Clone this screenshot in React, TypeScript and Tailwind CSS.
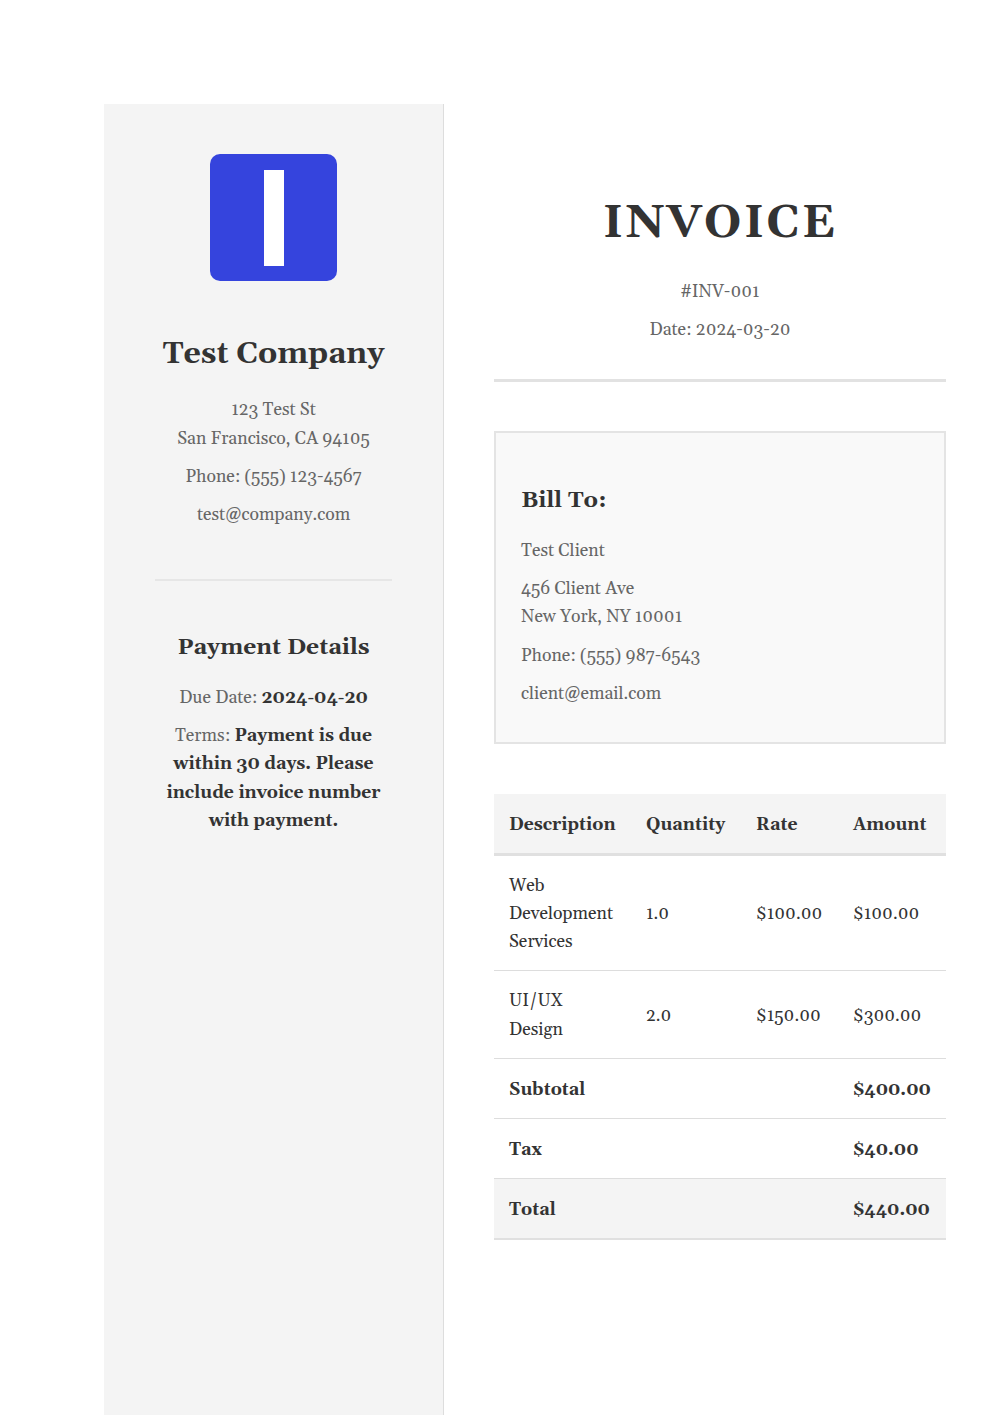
import React from "react";

const F = "font-['Gelasio','Georgia','Liberation_Serif',serif]";

function App() {
  return (
    <div className={`w-[1000px] h-[1415px] bg-white overflow-hidden pt-[104px] pl-[104px] pr-[4px] text-[#666666] text-[17.6px] leading-[28.32px] ${F}`}>
      <div className="flex h-[1311px]">
        <div className="w-[340px] shrink-0 bg-[#f4f4f4] border-r border-[#dddddd] p-[50px] text-center">
          <div className="w-[127px] h-[127px] mx-auto bg-[#3544dd] rounded-[10px] flex items-center justify-center">
            <div className="w-[20px] h-[96px] bg-white" />
          </div>
          <h1 className="mt-[49.4px] text-[30.4px] leading-[48px] font-bold text-[#333333]">Test Company</h1>
          <p className="mt-[18px]">123 Test St<br />San Francisco, CA 94105</p>
          <p className="mt-[10px]">Phone: (555) 123-4567</p>
          <p className="mt-[10px]">test@company.com</p>
          <div className="mt-[49px] mx-[1px] border-t-2 border-[#e6e6e6]" />
          <h2 className="mt-[49.6px] text-[22.88px] leading-[36px] font-bold text-[#333333]">Payment Details</h2>
          <p className="mt-[18px]">Due Date: <b className="text-[#333333]">2024-04-20</b></p>
          <p className="mt-[9.4px]">Terms: <b className="text-[#333333]">Payment is due within 30 days. Please include invoice number with payment.</b></p>
        </div>
        <div className="flex-1 px-[50px] pt-[50px] min-w-0">
          <div className="text-center border-b-[3px] border-[#e2e2e2] pb-[34px]">
            <h1 className="text-[46px] leading-[74px] font-bold tracking-[2.3px] text-[#333333] pt-[33px]">INVOICE</h1>
            <p className="mt-[17px]">#INV-001</p>
            <p className="mt-[10px]">Date: 2024-03-20</p>
          </div>
          <div className="mt-[49px] bg-[#f9f9f9] border-2 border-[#e4e4e4] px-[25px] pt-[50px] pb-[34px]">
            <h3 className="text-[22.88px] leading-[36px] font-bold text-[#333333]">Bill To:</h3>
            <p className="mt-[18px]">Test Client</p>
            <p className="mt-[10px]">456 Client Ave<br />New York, NY 10001</p>
            <p className="mt-[10px]">Phone: (555) 987-6543</p>
            <p className="mt-[10px]">client@email.com</p>
          </div>
          <table className="mt-[50px] w-full table-fixed border-collapse text-[#333333]">
            <thead>
              <tr className="bg-[#f4f4f4] border-b-[3px] border-[#e0e0e0] text-left">
                <th className="w-[137px] px-[15px] pt-[17px] pb-[13px]">Description</th>
                <th className="w-[110px] px-[15px] pt-[17px] pb-[13px]">Quantity</th>
                <th className="w-[97px] px-[15px] pt-[17px] pb-[13px]">Rate</th>
                <th className="w-[108px] px-[15px] pt-[17px] pb-[13px]">Amount</th>
              </tr>
            </thead>
            <tbody>
              <tr className="border-b border-[#dddddd]">
                <td className="px-[15px] pt-[16px] pb-[14px]">Web Development Services</td>
                <td className="px-[15px] pt-[16px] pb-[14px]">1.0</td>
                <td className="px-[15px] pt-[16px] pb-[14px]">$100.00</td>
                <td className="px-[15px] pt-[16px] pb-[14px]">$100.00</td>
              </tr>
              <tr className="border-b border-[#dddddd]">
                <td className="px-[15px] pt-[16px] pb-[14px]">UI/UX Design</td>
                <td className="px-[15px] pt-[16px] pb-[14px]">2.0</td>
                <td className="px-[15px] pt-[16px] pb-[14px]">$150.00</td>
                <td className="px-[15px] pt-[16px] pb-[14px]">$300.00</td>
              </tr>
              <tr className="border-b border-[#dddddd] font-bold">
                <td className="px-[15px] pt-[17px] pb-[13.5px]" colSpan={3}>Subtotal</td>
                <td className="px-[15px] pt-[17px] pb-[13.5px]">$400.00</td>
              </tr>
              <tr className="border-b border-[#dddddd] font-bold">
                <td className="px-[15px] pt-[17px] pb-[13.5px]" colSpan={3}>Tax</td>
                <td className="px-[15px] pt-[17px] pb-[13.5px]">$40.00</td>
              </tr>
              <tr className="border-b-2 border-[#e0e0e0] font-bold bg-[#f4f4f4]">
                <td className="px-[15px] pt-[17px] pb-[13.5px]" colSpan={3}>Total</td>
                <td className="px-[15px] pt-[17px] pb-[13.5px] whitespace-nowrap">$440.00</td>
              </tr>
            </tbody>
          </table>
        </div>
      </div>
    </div>
  );
}

export default App;
